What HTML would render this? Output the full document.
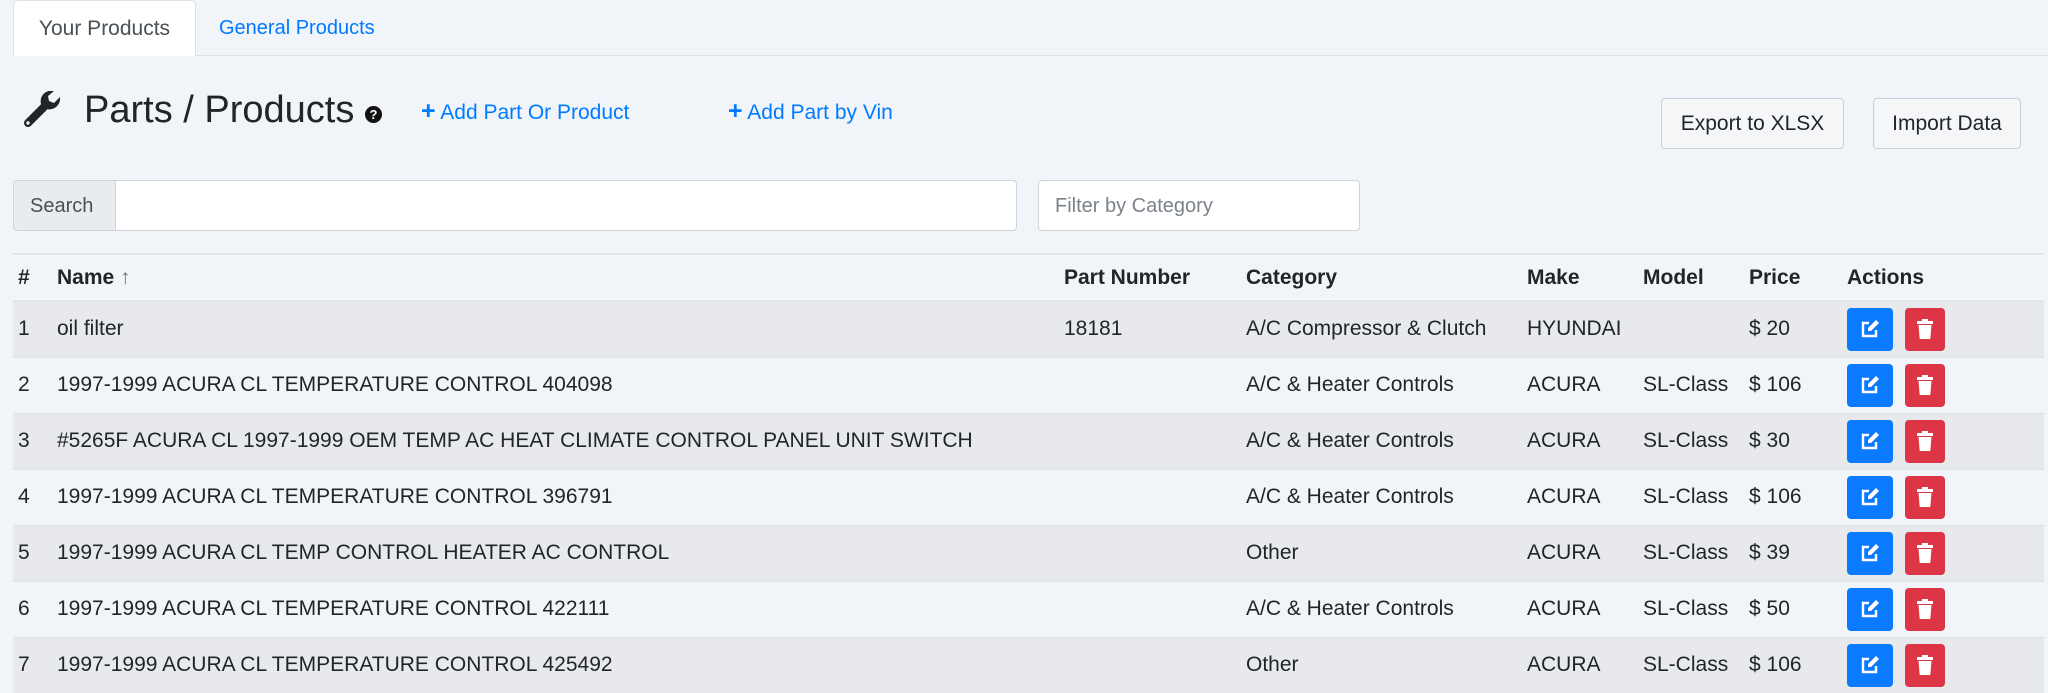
<!DOCTYPE html>
<html><head><meta charset="utf-8"><style>
*{box-sizing:border-box;margin:0;padding:0}
body{width:2048px;height:689px;overflow:hidden;background:#f1f4f8;font-family:"Liberation Sans",sans-serif;color:#212529;position:relative}
.a{position:absolute;white-space:nowrap}
.tabline{position:absolute;left:13px;right:0;top:55px;height:1px;background:#dee2e6}
.tab{left:13px;top:0;width:183px;height:56px;background:#fff;border:1px solid #dee2e6;border-bottom:none;border-radius:5px 5px 0 0;font-size:21px;color:#495057;padding-top:16px;text-align:center}
.link{color:#007bff;font-size:21px}
.btn{border:1px solid #ccd;background:#f5f6f8;border-radius:4px;font-size:21px;color:#212529;text-align:center;line-height:50px;height:51px}
table{position:absolute;left:13px;top:253px;width:2031px;border-collapse:collapse;font-size:21px}
th{text-align:left;font-weight:bold;height:47px;border-top:2px solid #e2e5ea;border-bottom:2px solid #e2e5ea;padding:0 0 0 5px}
td{height:56px;padding:0 0 0 5px;border-top:1px solid #dee2e6}
tr.o td{background:#e8e9ed}
.e,.d{display:inline-block;width:46px;height:43px;border-radius:4px;background:#0a7bff;vertical-align:middle;position:relative}
.d{width:40px;background:#dc3545;margin-left:12px}
.e svg,.d svg{position:absolute;left:50%;top:50%;transform:translate(-50%,-50%)}
</style></head><body>
<div class="tabline"></div>
<div class="a tab">Your Products</div>
<div class="a link" style="left:219px;top:17px;font-size:20px">General Products</div>

<svg class="a" style="left:22px;top:91px" width="40" height="38" viewBox="0 0 40 38"><path d="M6 32 L22 16" stroke="#212529" stroke-width="8" stroke-linecap="round"/><path d="M38 6 L32 12 L27 10 L26 5 L32 0 C24 -2 17 5 19 13 L24 18 C32 20 39 14 38 6Z" fill="#212529"/><circle cx="6" cy="32" r="1.7" fill="#f1f4f8"/></svg>
<div class="a" style="left:84px;top:89px;font-size:38px">Parts / Products</div>
<svg class="a" style="left:365px;top:106px" width="17" height="17" viewBox="0 0 17 17"><circle cx="8.5" cy="8.5" r="8.5" fill="#111"/><text x="8.5" y="13" font-size="13" font-weight="bold" fill="#fff" text-anchor="middle" font-family="Liberation Sans">?</text></svg>
<div class="a link" style="left:421px;top:97px"><b style="font-size:25px">+</b> Add Part Or Product</div>
<div class="a link" style="left:728px;top:97px"><b style="font-size:25px">+</b> Add Part by Vin</div>

<div class="a btn" style="left:1661px;top:98px;width:183px">Export to XLSX</div>
<div class="a btn" style="left:1873px;top:98px;width:148px">Import Data</div>

<div class="a" style="left:13px;top:180px;width:1004px;height:51px;border:1px solid #ced4da;border-radius:4px;background:#fff;overflow:hidden">
<div style="width:102px;height:100%;background:#e9ecef;border-right:1px solid #ced4da;font-size:20px;color:#495057;padding:14px 0 0 16px">Search</div></div>
<div class="a" style="left:1038px;top:180px;width:322px;height:51px;border:1px solid #ced4da;border-radius:4px;background:#fff;font-size:20px;color:#7a828a;padding:14px 0 0 16px">Filter by Category</div>

<table>
<colgroup><col style="width:39px"><col style="width:1007px"><col style="width:182px"><col style="width:281px"><col style="width:116px"><col style="width:106px"><col style="width:98px"><col></colgroup>
<tr><th>#</th><th>Name <span style="color:#777;font-weight:normal">↑</span></th><th>Part Number</th><th>Category</th><th>Make</th><th>Model</th><th>Price</th><th>Actions</th></tr>
<tr class="o"><td>1</td><td>oil filter</td><td>18181</td><td>A/C Compressor &amp; Clutch</td><td>HYUNDAI</td><td></td><td>$ 20</td><td><span class="e"></span><span class="d"></span></td></tr>
<tr><td>2</td><td>1997-1999 ACURA CL TEMPERATURE CONTROL 404098</td><td></td><td>A/C &amp; Heater Controls</td><td>ACURA</td><td>SL-Class</td><td>$ 106</td><td><span class="e"></span><span class="d"></span></td></tr>
<tr class="o"><td>3</td><td>#5265F ACURA CL 1997-1999 OEM TEMP AC HEAT CLIMATE CONTROL PANEL UNIT SWITCH</td><td></td><td>A/C &amp; Heater Controls</td><td>ACURA</td><td>SL-Class</td><td>$ 30</td><td><span class="e"></span><span class="d"></span></td></tr>
<tr><td>4</td><td>1997-1999 ACURA CL TEMPERATURE CONTROL 396791</td><td></td><td>A/C &amp; Heater Controls</td><td>ACURA</td><td>SL-Class</td><td>$ 106</td><td><span class="e"></span><span class="d"></span></td></tr>
<tr class="o"><td>5</td><td>1997-1999 ACURA CL TEMP CONTROL HEATER AC CONTROL</td><td></td><td>Other</td><td>ACURA</td><td>SL-Class</td><td>$ 39</td><td><span class="e"></span><span class="d"></span></td></tr>
<tr><td>6</td><td>1997-1999 ACURA CL TEMPERATURE CONTROL 422111</td><td></td><td>A/C &amp; Heater Controls</td><td>ACURA</td><td>SL-Class</td><td>$ 50</td><td><span class="e"></span><span class="d"></span></td></tr>
<tr class="o"><td>7</td><td>1997-1999 ACURA CL TEMPERATURE CONTROL 425492</td><td></td><td>Other</td><td>ACURA</td><td>SL-Class</td><td>$ 106</td><td><span class="e"></span><span class="d"></span></td></tr>
</table>
<script>
document.querySelectorAll('.e').forEach(function(e){e.innerHTML='<svg width="20" height="20" viewBox="0 0 20 20"><path d="M9 4H3v13h13v-6" fill="none" stroke="#fff" stroke-width="2.4"/><path d="M16 1l3 3-8 8H8V9z" fill="#fff"/></svg>';});
document.querySelectorAll('.d').forEach(function(e){e.innerHTML='<svg width="16" height="20" viewBox="0 0 16 20"><rect x="0" y="2" width="16" height="3" fill="#fff"/><rect x="5" y="0" width="6" height="3" fill="#fff"/><path d="M1.5 6h13l-1.2 14H2.7z" fill="#fff"/></svg>';});
</script>
</body></html>
